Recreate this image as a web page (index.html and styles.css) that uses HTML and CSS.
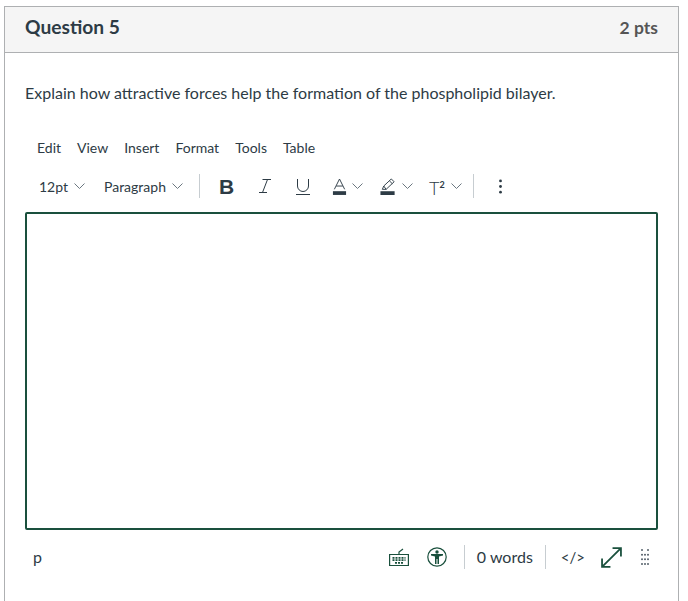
FILE: index.html
```html
<!DOCTYPE html>
<html lang="en">
<head>
<meta charset="utf-8">
<title>Question 5</title>
<link rel="stylesheet" href="styles.css">
</head>
<body>
<section class="card">
  <header class="card-head">
    <h2 class="title">Question 5</h2>
    <div class="pts">2 pts</div>
  </header>
  <div class="card-body">
    <p class="prompt">Explain how attractive forces help the formation of the phospholipid bilayer.</p>
    <nav class="menubar">
      <span>Edit</span><span>View</span><span>Insert</span><span>Format</span><span>Tools</span><span>Table</span>
    </nav>
    <div class="toolbar">
      <span class="select size">12pt <svg class="chev" viewBox="0 0 11 6"><path d="M.5.5 5.500 5.500 10.500.5"/></svg></span>
      <span class="select para">Paragraph <svg class="chev" viewBox="0 0 11 6"><path d="M.5.5 5.500 5.500 10.500.5"/></svg></span>
      <span class="sep"></span>
      <span class="tool bold">B</span>
      <svg class="icon italic" viewBox="0 0 16 16"><path d="M5.500 1.500h8.500M2 14.500h8M10.500 1.500 5.500 14.500"/></svg>
      <svg class="icon under" viewBox="0 0 16 18"><path d="M2.500 1v7a5.500 5.500 0 0 0 11 0V1M1 16.500h14"/></svg>
      <span class="color">
        <svg class="icon fore" viewBox="0 0 16 18"><path d="M2.500 12 8 1l5.500 11M4.500 8.500h7"/><rect x="1" y="14" width="14" height="4"/></svg>
        <svg class="chev" viewBox="0 0 11 6"><path d="M.5.500 5.500 5.500 10.500.5"/></svg>
      </span>
      <span class="color">
        <svg class="icon mark" viewBox="0 0 16 18"><path d="M3.500 8.500 2 12h4l8.500-8L11.500 1z"/><path d="M3.500 8.500 6 12M9.500 3l3 3"/><rect x="0" y="14" width="15" height="4"/></svg>
        <svg class="chev" viewBox="0 0 11 6"><path d="M.5.5 5.500 5.500 10.500.5"/></svg>
      </span>
      <span class="color">
        <span class="tsup">T<sup>2</sup></span>
        <svg class="chev" viewBox="0 0 11 6"><path d="M.5.5 5.500 5.500 10.500.5"/></svg>
      </span>
      <span class="sep sep-b"></span>
      <svg class="more" viewBox="0 0 4 16"><circle cx="2" cy="2" r="1.500"/><circle cx="2" cy="8" r="1.500"/><circle cx="2" cy="14" r="1.500"/></svg>
    </div>
    <div class="editor"></div>
    <footer class="status">
      <span class="path">p</span>
      <div class="status-right">
        <svg class="st kbd" viewBox="0 0 20 20"><path d="M.6 7.500h18.800v11H.6zM10 7.500V5l4-3"/><path class="dots" d="M3.500 10.800h13M3.500 13.200h13M6 15.800h8"/></svg>
        <svg class="st a11y" viewBox="0 0 20 20"><circle cx="10" cy="10" r="9.200"/><circle class="fill" cx="10" cy="5" r="1.700"/><path class="fill" d="M4 7h12v1.600l-4 .8V17h-1.500v-5h-1v5H8V9.400L4 8.600z"/></svg>
        <span class="sep"></span>
        <span class="words">0 words</span>
        <span class="sep"></span>
        <span class="code">&lt;/&gt;</span>
        <svg class="st expand" viewBox="0 0 20 20"><path d="M1 19 19 1M11 1h8v8M1 11v8h8"/></svg>
        <svg class="grip" viewBox="0 0 8 16"><circle cx="1" cy="1" r="1"/><circle cx="7" cy="1" r="1"/><circle cx="1" cy="5.700" r="1"/><circle cx="7" cy="5.700" r="1"/><circle cx="1" cy="10.300" r="1"/><circle cx="7" cy="10.300" r="1"/><circle cx="1" cy="15" r="1"/><circle cx="7" cy="15" r="1"/><circle cx="4" cy="5.700" r="1"/><circle cx="4" cy="10.300" r="1"/><circle cx="4" cy="15" r="1"/></svg>
      </div>
    </footer>
  </div>
</section>
</body>
</html>
```
FILE: styles.css
```css
* { box-sizing: border-box; }
html, body { height: 100%; }
body {
  margin: 0;
  padding: 6px 9px 0 4px;
  overflow: hidden;
  background: #fff;
  font-family: Lato, "Open Sans", sans-serif;
  color: #2d3b45;
}
.card {
  height: 100%;
  border: 1px solid #aeb0b2;
  border-bottom: 0;
}
.card-head {
  height: 46px;
  display: flex;
  justify-content: space-between;
  align-items: center;
  padding: 0 20px 6px 20px;
  background: #f5f5f5;
  border-bottom: 1px solid #aeb0b2;
}
.title { margin: 0; font-size: 19.200px; font-weight: 700; line-height: 28px; }
.pts { font-size: 17.500px; font-weight: 700; color: #555; line-height: 24px; padding-top: 2px; }
.card-body { padding: 0 20px; }
.prompt { margin: 0; padding-top: 29px; font-size: 16px; line-height: 22px; height: 75px; }
.menubar {
  display: flex;
  gap: 16px;
  height: 19px;
  margin-top: 10px;
  padding-left: 12px;
  font-size: 14px;
  line-height: 19px;
}
.toolbar {
  display: flex;
  align-items: center;
  height: 36px;
  margin-top: 11px;
  padding-left: 14px;
  font-size: 14px;
}
.chev { width: 11px; height: 6px; fill: none; stroke: #6b7780; stroke-width: 1; flex: none; }
.select { display: inline-flex; align-items: center; gap: 6px; white-space: nowrap; }
.size { width: 65px; }
.para { width: 95px; }
.sep { width: 1px; height: 24px; background: #c7cdd1; flex: none; }
.tool.bold { margin-left: 19px; padding-top: 2px; width: 24px; font-family: "Liberation Sans", sans-serif; font-size: 21px; font-weight: 700; color: #2d3b45; line-height: 24px; }
.icon { fill: none; stroke: #2d3b45; stroke-width: 1; flex: none; }
.icon rect { fill: #2d3b45; stroke: none; }
.italic { width: 16px; height: 16px; margin-left: 14px; }
.under { width: 16px; height: 18px; margin-left: 22px; margin-top: 2px; }
.color { display: inline-flex; align-items: center; gap: 5px; }
.fore { width: 15px; height: 17px; margin-left: 21px; }
.mark { width: 16px; height: 17px; margin-left: 17px; margin-right: 1px; }
.tsup { margin-left: 16px; padding-top: 3px; font-size: 18px; font-weight: 300; line-height: 22px; width: 17px; white-space: nowrap; }
.tsup sup { font-size: 9px; font-weight: 700; vertical-align: 7px; line-height: 0; }
.sep-b { margin-left: 11px; }
.more { width: 5px; height: 15px; margin-left: 24px; fill: #2d3b45; }
.editor {
  height: 318px;
  margin-top: 8px;
  border: 2px solid #1a503d;
  border-radius: 2px;
}
.status {
  display: flex;
  justify-content: space-between;
  align-items: center;
  height: 32px;
  margin-top: 11px;
  padding-left: 8px;
  font-size: 16px;
}
.path { font-size: 16px; line-height: 24px; }
.status-right { display: flex; align-items: center; height: 24px; padding-right: 9px; }
.st { fill: none; stroke: #1a503d; stroke-width: 1.200; flex: none; }
.st .fill { fill: #1a503d; stroke: none; }
.st .dots { stroke-width: 1.700; stroke-dasharray: 2 1; }
.kbd { width: 20px; height: 20px; }
.a11y { width: 20px; height: 20px; margin-left: 18px; margin-right: 17px; }
.words { margin: 0 12px; font-size: 16px; line-height: 24px; white-space: nowrap; }
.code { margin: 0 16px 0 15px; font-size: 15px; white-space: nowrap; }
.expand { width: 21px; height: 21px; stroke-width: 1.700; }
.grip { width: 8px; height: 16px; margin-left: 19px; fill: #55606a; }
```
